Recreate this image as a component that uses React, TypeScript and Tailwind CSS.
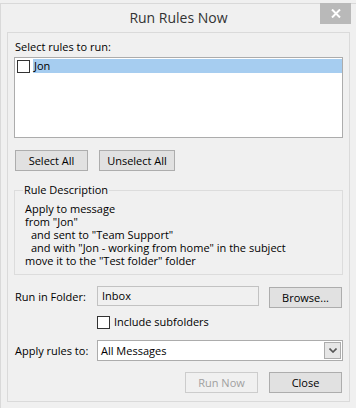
import React from 'react';

const font = "font-['Segoe_UI','Open_Sans','Noto_Sans',sans-serif]";

function Button({ label, disabled = false, width = 'w-[73px]' }: { label: string; disabled?: boolean; width?: string }) {
  return (
    <div
      className={
        `flex h-[21px] ${width} items-center justify-center border ` +
        (disabled
          ? 'border-[#cccccc] bg-[#f0f0f0] text-[#a0a0a0]'
          : 'border-[#adadad] bg-[#e1e1e1] text-black')
      }
    >
      {label}
    </div>
  );
}

function Checkbox() {
  return <div className="h-[13px] w-[13px] shrink-0 border border-[#333333] bg-white" />;
}

export default function App() {
  return (
    <div className={`h-[408px] w-[356px] overflow-hidden bg-[#f0f0f0] ${font} text-[11px] leading-[16px] text-black`}>
      <div className="mt-[3px] h-[405px] border-l border-t border-[#d9d9d9] bg-[#f0f0f0]">
        {/* Title bar */}
        <div className="relative flex h-[28px] items-center justify-center">
          <span className="text-[14px] text-[#333333]">Run Rules Now</span>
          <div className="absolute right-[5px] top-[-1px] flex h-[21px] w-[31px] items-center justify-center bg-[#b9b9b9]">
            <svg width="10" height="9" viewBox="0 0 10 9">
              <path d="M1 0.5 L9 8.5 M9 0.5 L1 8.5" stroke="white" strokeWidth="2" />
            </svg>
          </div>
        </div>

        {/* Main panel */}
        <div className="ml-[6px] h-[370px] w-[343px] border border-[#dadada] px-[6px] pt-[6px]">
          <div className="pl-[1px]">Select rules to run:</div>

          <div className="mt-[2px] h-[81px] w-[329px] border border-[#acacac] bg-white pl-[2px] pt-[1px]">
            <div className="flex h-[14px] items-center">
              <Checkbox />
              <div className="ml-[3px] flex h-[14px] flex-1 items-center bg-[#a6cdf0] pl-[1px]">Jon</div>
            </div>
          </div>

          <div className="mt-[12px] flex gap-[11px] pl-[1px]">
            <Button label="Select All" />
            <Button label="Unselect All" width="w-[76px]" />
          </div>

          <fieldset className="mt-[11px] h-[93px] w-[329px] border border-[#dcdcdc] pl-[10px]">
            <legend className="ml-[-2px] px-[1px]">Rule Description</legend>
            <div className="mt-[4px] leading-[13px]">
              <div>Apply to message</div>
              <div>from "Jon"</div>
              <div className="pl-[6px]">and sent to "Team Support"</div>
              <div className="pl-[6px]">and with "Jon - working from home" in the subject</div>
              <div>move it to the "Test folder" folder</div>
            </div>
          </fieldset>

          <div className="mt-[11px] flex items-start">
            <div className="w-[83px] pl-[1px] pt-[3px]">Run in Folder:</div>
            <div className="flex h-[20px] w-[162px] items-center border border-[#c2c2c2] bg-[#f0f0f0] pl-[4px]">Inbox</div>
            <div className="ml-[10px] mt-[1px]">
              <Button label="Browse..." />
            </div>
          </div>

          <div className="mt-[6px] flex items-center pl-[83px]">
            <Checkbox />
            <span className="ml-[4px]">Include subfolders</span>
          </div>

          <div className="mt-[10px] flex items-center">
            <div className="w-[83px] pl-[1px]">Apply rules to:</div>
            <div className="flex h-[21px] w-[246px] items-center justify-between border border-[#acacac] bg-white pl-[3px] pr-[1px]">
              <span>All Messages</span>
              <div className="flex h-[17px] w-[17px] items-center justify-center border border-[#acacac] bg-[#e6e6e6]">
                <svg width="8" height="5" viewBox="0 0 8 5">
                  <path d="M0.5 0.5 L4 4 L7.5 0.5" fill="none" stroke="#555555" strokeWidth="1.6" />
                </svg>
              </div>
            </div>
          </div>

          <div className="mt-[11px] flex justify-end gap-[11px] pr-[1px]">
            <Button label="Run Now" disabled />
            <Button label="Close" />
          </div>
        </div>
      </div>
    </div>
  );
}
